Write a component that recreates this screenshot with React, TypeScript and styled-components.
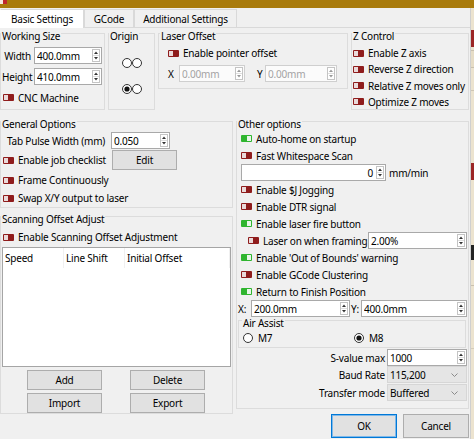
import React from "react";
import styled, { createGlobalStyle } from "styled-components";

const FONT = `"Noto Sans", "Open Sans", "DejaVu Sans", sans-serif`;

const GlobalStyle = createGlobalStyle`
  html, body { margin: 0; padding: 0; background: #f0f0f0; }
  body { font-family: ${FONT}; font-size: 10px; letter-spacing: -0.2px; color: #000; }
  * { box-sizing: border-box; }
`;

const Screen = styled.div`
  width: 474px;
  height: 439px;
  display: flex;
  flex-direction: column;
  overflow: hidden;
`;

const TitleBar = styled.div`
  height: 8px;
  flex: none;
  background: #a97b0c;
  display: flex;
  align-items: flex-start;
`;

const Stage = styled.div`
  flex: 1;
  display: flex;
  min-height: 0;
`;

const Dialog = styled.div`
  width: 471px;
  flex: none;
  display: flex;
  flex-direction: column;
  background: #f0f0f0;
  border-right: 1px solid #cfcfcf;
`;

const Backdrop = styled.div`
  flex: 1;
  background: linear-gradient(
    to bottom,
    #ece3cf 0px, #ece3cf 22px,
    #9c2626 22px, #9c2626 39px,
    #ece3cf 39px, #ece3cf 42px,
    #c9c0ae 42px, #c9c0ae 43px,
    #e6dcc6 43px, #e6dcc6 59px,
    #c9c0ae 59px, #c9c0ae 60px,
    #ece3cf 60px, #ece3cf 82px,
    #cfc6b4 82px, #cfc6b4 83px,
    #ece3cf 83px, #ece3cf 155px,
    #9c2626 155px, #9c2626 172px,
    #ece3cf 172px, #ece3cf 237px,
    #222 237px, #222 252px,
    #ece3cf 252px, #ece3cf 277px,
    #c9c0ae 277px, #c9c0ae 278px,
    #ece3cf 278px, #ece3cf 340px,
    #d5ccb9 340px, #d5ccb9 341px,
    #ece3cf 341px
  );
`;

const TabBar = styled.div`
  height: 20px;
  flex: none;
  display: flex;
  align-items: flex-end;
  border-bottom: 1px solid #d9d9d9;
`;

const Tab = styled.div<{ $active?: boolean; $w: number }>`
  width: ${(p) => p.$w}px;
  height: ${(p) => (p.$active ? 19 : 18)}px;
  margin-bottom: ${(p) => (p.$active ? -1 : 0)}px;
  display: flex;
  align-items: center;
  justify-content: center;
  background: ${(p) => (p.$active ? "#ffffff" : "#f0f0f0")};
  border: 1px solid #d9d9d9;
  border-bottom: none;
  border-left-color: ${(p) => (p.$active ? "transparent" : "#d9d9d9")};
  white-space: nowrap;
`;

const Page = styled.div`
  flex: 1;
  min-height: 0;
  display: flex;
  flex-direction: column;
  padding-right: 1px;
`;

const TopRow = styled.div`
  display: grid;
  grid-template-columns: 105px 47px 190px 1fr;
  column-gap: 3px;
  padding-top: 5px;
`;

const BottomRow = styled.div`
  display: grid;
  grid-template-columns: 233px 1fr;
  column-gap: 3px;
  margin-top: 11px;
  align-items: start;
`;

const Column = styled.div`
  display: flex;
  flex-direction: column;
  min-width: 0;
`;

const Group = styled.section<{ $fit?: boolean; $mt?: number; $mr?: number }>`
  border: 1px solid #dcdcdc;
  display: flex;
  flex-direction: column;
  align-self: ${(p) => (p.$fit ? "start" : "stretch")};
  margin-top: ${(p) => p.$mt ?? 0}px;
  margin-right: ${(p) => p.$mr ?? 0}px;
  min-width: 0;
`;

const Legend = styled.div<{ $x?: number }>`
  margin: -4px 0 0 ${(p) => p.$x ?? 0}px;
  height: 12px;
  line-height: 12px;
  padding: 0 1px;
  width: fit-content;
  background: #f0f0f0;
  white-space: nowrap;
`;

const GroupBody = styled.div<{ $pad: string; $gap?: number; $center?: boolean }>`
  display: flex;
  flex-direction: column;
  padding: ${(p) => p.$pad};
  gap: ${(p) => p.$gap ?? 0}px;
  align-items: ${(p) => (p.$center ? "center" : "stretch")};
`;

const Row = styled.div<{
  $h?: number;
  $gap?: number;
  $pl?: number;
  $mt?: number;
  $pr?: number;
  $end?: boolean;
}>`
  display: flex;
  align-items: center;
  height: ${(p) => p.$h ?? 17}px;
  gap: ${(p) => p.$gap ?? 0}px;
  padding-left: ${(p) => p.$pl ?? 0}px;
  padding-right: ${(p) => p.$pr ?? 0}px;
  margin-top: ${(p) => p.$mt ?? 0}px;
  justify-content: ${(p) => (p.$end ? "flex-end" : "flex-start")};
  white-space: nowrap;
  flex: none;
`;

const FieldLabel = styled.span<{ $w?: number; $right?: boolean; $pl?: number; $ml?: number }>`
  flex: ${(p) => (p.$w ? "none" : "0 0 auto")};
  width: ${(p) => (p.$w ? `${p.$w}px` : "auto")};
  text-align: ${(p) => (p.$right ? "right" : "left")};
  padding-left: ${(p) => p.$pl ?? 0}px;
  margin-left: ${(p) => p.$ml ?? 0}px;
  white-space: nowrap;
`;

const ToggleSvg = styled.svg`
  flex: none;
  display: block;
`;

const CheckText = styled.span`
  margin-left: 4px;
  white-space: nowrap;
`;

const SpinBox = styled.div<{ $w?: number; $disabled?: boolean; $ml?: string }>`
  display: flex;
  align-items: center;
  width: ${(p) => (p.$w ? `${p.$w}px` : "auto")};
  flex: ${(p) => (p.$w ? "none" : "1 1 0")};
  min-width: 0;
  height: 17px;
  margin-left: ${(p) => p.$ml ?? "0"};
  border: 1px solid ${(p) => (p.$disabled ? "#cfcfcf" : "#a9a9a9")};
  background: ${(p) => (p.$disabled ? "#fbfbfb" : "#ffffff")};
  color: ${(p) => (p.$disabled ? "#a3a3a3" : "#000")};
  padding: 0 1px 0 2px;
`;

const SpinText = styled.span<{ $right?: boolean }>`
  flex: 1;
  min-width: 0;
  text-align: ${(p) => (p.$right ? "right" : "left")};
  padding-right: ${(p) => (p.$right ? 3 : 0)}px;
  white-space: nowrap;
  overflow: hidden;
`;

const Select = styled.div<{ $w: number }>`
  display: flex;
  align-items: center;
  width: ${(p) => p.$w}px;
  height: 17px;
  flex: none;
  background: #e5e5e5;
  border: 1px solid #d6d6d6;
  padding: 0 8px 0 2px;
`;

const SelectText = styled.span`
  flex: 1;
`;

const PushButton = styled.button<{ $w: number; $h: number; $primary?: boolean; $ml?: number }>`
  font: inherit;
  letter-spacing: inherit;
  color: #000;
  width: ${(p) => p.$w}px;
  height: ${(p) => p.$h}px;
  margin-left: ${(p) => p.$ml ?? 0}px;
  padding: 0;
  background: #e1e1e1;
  border: 1px solid ${(p) => (p.$primary ? "#0078d7" : "#adadad")};
  box-shadow: ${(p) => (p.$primary ? "inset 0 0 0 1px #7fb8e8" : "none")};
  flex: none;
`;

const Table = styled.div`
  height: 120px;
  margin: 1px 1px 0 1px;
  background: #ffffff;
  border: 1px solid #a5a5a5;
  flex: none;
`;

const TableHead = styled.div`
  display: grid;
  grid-template-columns: 61px 61px 1fr;
  height: 20px;
`;

const HeadCell = styled.div`
  display: flex;
  align-items: center;
  padding-left: 2px;
  border-right: 1px solid #f0f0f0;
  white-space: nowrap;
`;

const ButtonGrid = styled.div`
  display: grid;
  grid-template-columns: 75px 75px;
  column-gap: 28px;
  row-gap: 3px;
  padding-left: 26px;
  margin-top: 3px;
`;

const RadioPair = styled.div`
  display: flex;
  height: 10px;
`;

const RadioGrid = styled.div`
  display: grid;
  grid-template-columns: 111px 1fr;
  height: 16px;
  align-items: center;
`;

const RadioItem = styled.div`
  display: flex;
  align-items: center;
  gap: 5px;
`;

const DialogButtons = styled.div`
  display: flex;
  justify-content: flex-end;
  gap: 6px;
  margin-top: 5px;
`;

const IconSvg = styled.svg`
  flex: none;
  display: block;
`;

/* ---------- small drawings ---------- */

const Toggle = ({ on }: { on?: boolean }) => (
  <ToggleSvg width="11" height="7" viewBox="0 0 11 7">
    <rect x="0" y="0" width="11" height="7" rx="1" fill={on ? "#2fb52f" : "#8f1c1c"} />
    <rect x={on ? 6 : 1} y="1" width="4" height="5" fill={on ? "#eaf6ea" : "#eadada"} />
  </ToggleSvg>
);

const Spinner = ({ disabled }: { disabled?: boolean }) => (
  <IconSvg width="8" height="13" viewBox="0 0 8 13">
    <rect x="0.5" y="0.5" width="7" height="12" fill="#fff" stroke="#c4c4c4" />
    <line x1="1" y1="6.5" x2="7" y2="6.5" stroke="#dedede" />
    <path d="M2 5 L4 2.6 L6 5 Z" fill={disabled ? "#9a9a9a" : "#333"} />
    <path d="M2 8 L4 10.4 L6 8 Z" fill={disabled ? "#9a9a9a" : "#333"} />
  </IconSvg>
);

const Chevron = () => (
  <IconSvg width="7" height="4" viewBox="0 0 7 4">
    <path d="M0.5 0.5 L3.5 3.5 L6.5 0.5" fill="none" stroke="#8a8a8a" strokeWidth="1" />
  </IconSvg>
);

const Radio = ({ checked }: { checked?: boolean }) => (
  <IconSvg width="10" height="10" viewBox="0 0 10 10">
    <circle cx="5" cy="5" r="4.5" fill="#fff" stroke="#333" />
    {checked && <circle cx="5" cy="5" r="2.6" fill="#111" />}
  </IconSvg>
);

const AppIcon = () => (
  <IconSvg width="8" height="4" viewBox="0 0 8 4">
    <rect x="0" y="0" width="3" height="4" fill="#f4e8e0" />
    <rect x="3" y="0" width="4" height="4" fill="#c0272d" />
  </IconSvg>
);

/* ---------- composite pieces ---------- */

const Check = ({
  label,
  on,
  pl = 0,
  h = 17,
  mt = 0,
}: {
  label: string;
  on?: boolean;
  pl?: number;
  h?: number;
  mt?: number;
}) => (
  <Row $h={h} $pl={pl} $mt={mt}>
    <Toggle on={on} />
    <CheckText>{label}</CheckText>
  </Row>
);

const Spin = ({
  value,
  w,
  disabled,
  right,
  ml,
}: {
  value: string;
  w?: number;
  disabled?: boolean;
  right?: boolean;
  ml?: string;
}) => (
  <SpinBox $w={w} $disabled={disabled} $ml={ml}>
    <SpinText $right={right}>{value}</SpinText>
    <Spinner disabled={disabled} />
  </SpinBox>
);

const Combo = ({ value, w }: { value: string; w: number }) => (
  <Select $w={w}>
    <SelectText>{value}</SelectText>
    <Chevron />
  </Select>
);

export default function App() {
  return (
    <>
      <GlobalStyle />
      <Screen>
        <TitleBar>
          <AppIcon />
        </TitleBar>
        <Stage>
          <Dialog>
            <TabBar>
              <Tab $active $w={84}>Basic Settings</Tab>
              <Tab $w={50}>GCode</Tab>
              <Tab $w={103}>Additional Settings</Tab>
            </TabBar>
            <Page>
              <TopRow>
                <Group>
                  <Legend>Working Size</Legend>
                  <GroupBody $pad="5px 0 3px 1px" $gap={4}>
                    <Row>
                      <FieldLabel $w={29} $right>Width</FieldLabel>
                      <Spin value="400.0mm" w={68} ml="3px" />
                    </Row>
                    <Row>
                      <FieldLabel $w={29} $right>Height</FieldLabel>
                      <Spin value="410.0mm" w={68} ml="3px" />
                    </Row>
                    <Check label="CNC Machine" pl={1} />
                  </GroupBody>
                </Group>

                <Group>
                  <Legend>Origin</Legend>
                  <GroupBody $pad="16px 0 0 0" $gap={16} $center>
                    <RadioPair>
                      <Radio />
                      <Radio />
                    </RadioPair>
                    <RadioPair>
                      <Radio checked />
                      <Radio />
                    </RadioPair>
                  </GroupBody>
                </Group>

                <Group $fit>
                  <Legend $x={1}>Laser Offset</Legend>
                  <GroupBody $pad="3px 0 6px 9px" $gap={4}>
                    <Check label="Enable pointer offset" h={16} />
                    <Row>
                      <FieldLabel $w={8}>X</FieldLabel>
                      <Spin value="0.00mm" w={66} disabled ml="3px" />
                      <FieldLabel $w={8} $ml={12}>Y</FieldLabel>
                      <Spin value="0.00mm" w={72} disabled />
                    </Row>
                  </GroupBody>
                </Group>

                <Group>
                  <Legend>Z Control</Legend>
                  <GroupBody $pad="3px 0 0 1px">
                    <Check label="Enable Z axis" h={16} />
                    <Check label="Reverse Z direction" h={16.5} />
                    <Check label="Relative Z moves only" h={16.5} />
                    <Check label="Optimize Z moves" h={15} />
                  </GroupBody>
                </Group>
              </TopRow>

              <BottomRow>
                <Column>
                  <Group>
                    <Legend>General Options</Legend>
                    <GroupBody $pad="2px 0 0 0">
                      <Row>
                        <FieldLabel $w={110} $pl={6}>Tab Pulse Width (mm)</FieldLabel>
                        <Spin value="0.050" w={59} />
                      </Row>
                      <Row $h={20} $mt={1} $pl={2}>
                        <Toggle />
                        <FieldLabel $w={95} $pl={4}>Enable job checklist</FieldLabel>
                        <PushButton $w={65} $h={20} $ml={3}>Edit</PushButton>
                      </Row>
                      <Check label="Frame Continuously" pl={2} h={18} mt={1} />
                      <Check label="Swap X/Y output to laser" pl={2} h={18} />
                    </GroupBody>
                  </Group>

                  <Group $mt={8}>
                    <Legend>Scanning Offset Adjust</Legend>
                    <GroupBody $pad="3px 0 0 0">
                      <Check label="Enable Scanning Offset Adjustment" pl={2} h={18} />
                      <Table>
                        <TableHead>
                          <HeadCell>Speed</HeadCell>
                          <HeadCell>Line Shift</HeadCell>
                          <HeadCell>Initial Offset</HeadCell>
                        </TableHead>
                      </Table>
                      <ButtonGrid>
                        <PushButton $w={75} $h={20}>Add</PushButton>
                        <PushButton $w={75} $h={20}>Delete</PushButton>
                        <PushButton $w={75} $h={20}>Import</PushButton>
                        <PushButton $w={75} $h={20}>Export</PushButton>
                      </ButtonGrid>
                    </GroupBody>
                  </Group>
                </Column>

                <Column>
                  <Group>
                    <Legend>Other options</Legend>
                    <GroupBody $pad="0 1px 7px 1px">
                      <Check label="Auto-home on startup" on pl={3} />
                      <Check label="Fast Whitespace Scan" pl={3} />
                      <Row $pl={3} $gap={3}>
                        <Spin value="0" w={145} right />
                        <FieldLabel>mm/min</FieldLabel>
                      </Row>
                      <Check label="Enable $J Jogging" pl={3} />
                      <Check label="Enable DTR signal" pl={3} />
                      <Check label="Enable laser fire button" on pl={3} />
                      <Row $pl={10} $pr={0}>
                        <Toggle />
                        <CheckText>Laser on when framing</CheckText>
                        <Spin value="2.00%" w={99} ml="auto" />
                      </Row>
                      <Check label="Enable 'Out of Bounds' warning" on pl={3} />
                      <Check label="Enable GCode Clustering" pl={3} />
                      <Check label="Return to Finish Position" on pl={3} />
                      <Row>
                        <FieldLabel $w={13}>X:</FieldLabel>
                        <Spin value="200.0mm" w={99} />
                        <FieldLabel $w={11} $pl={1}>Y:</FieldLabel>
                        <Spin value="400.0mm" />
                      </Row>

                      <Group $mt={3} $mr={1}>
                        <Legend $x={3}>Air Assist</Legend>
                        <GroupBody $pad="1px 0 1px 4px">
                          <RadioGrid>
                            <RadioItem>
                              <Radio />
                              <span>M7</span>
                            </RadioItem>
                            <RadioItem>
                              <Radio checked />
                              <span>M8</span>
                            </RadioItem>
                          </RadioGrid>
                        </GroupBody>
                      </Group>

                      <Row $mt={1} $end $gap={2}>
                        <FieldLabel>S-value max</FieldLabel>
                        <Spin value="1000" w={80} />
                      </Row>
                      <Row $end $gap={2}>
                        <FieldLabel>Baud Rate</FieldLabel>
                        <Combo value="115,200" w={80} />
                      </Row>
                      <Row $mt={1} $end $gap={2}>
                        <FieldLabel>Transfer mode</FieldLabel>
                        <Combo value="Buffered" w={80} />
                      </Row>
                    </GroupBody>
                  </Group>
                  <DialogButtons>
                    <PushButton $w={66} $h={24} $primary>OK</PushButton>
                    <PushButton $w={66} $h={24}>Cancel</PushButton>
                  </DialogButtons>
                </Column>
              </BottomRow>
            </Page>
          </Dialog>
          <Backdrop />
        </Stage>
      </Screen>
    </>
  );
}
